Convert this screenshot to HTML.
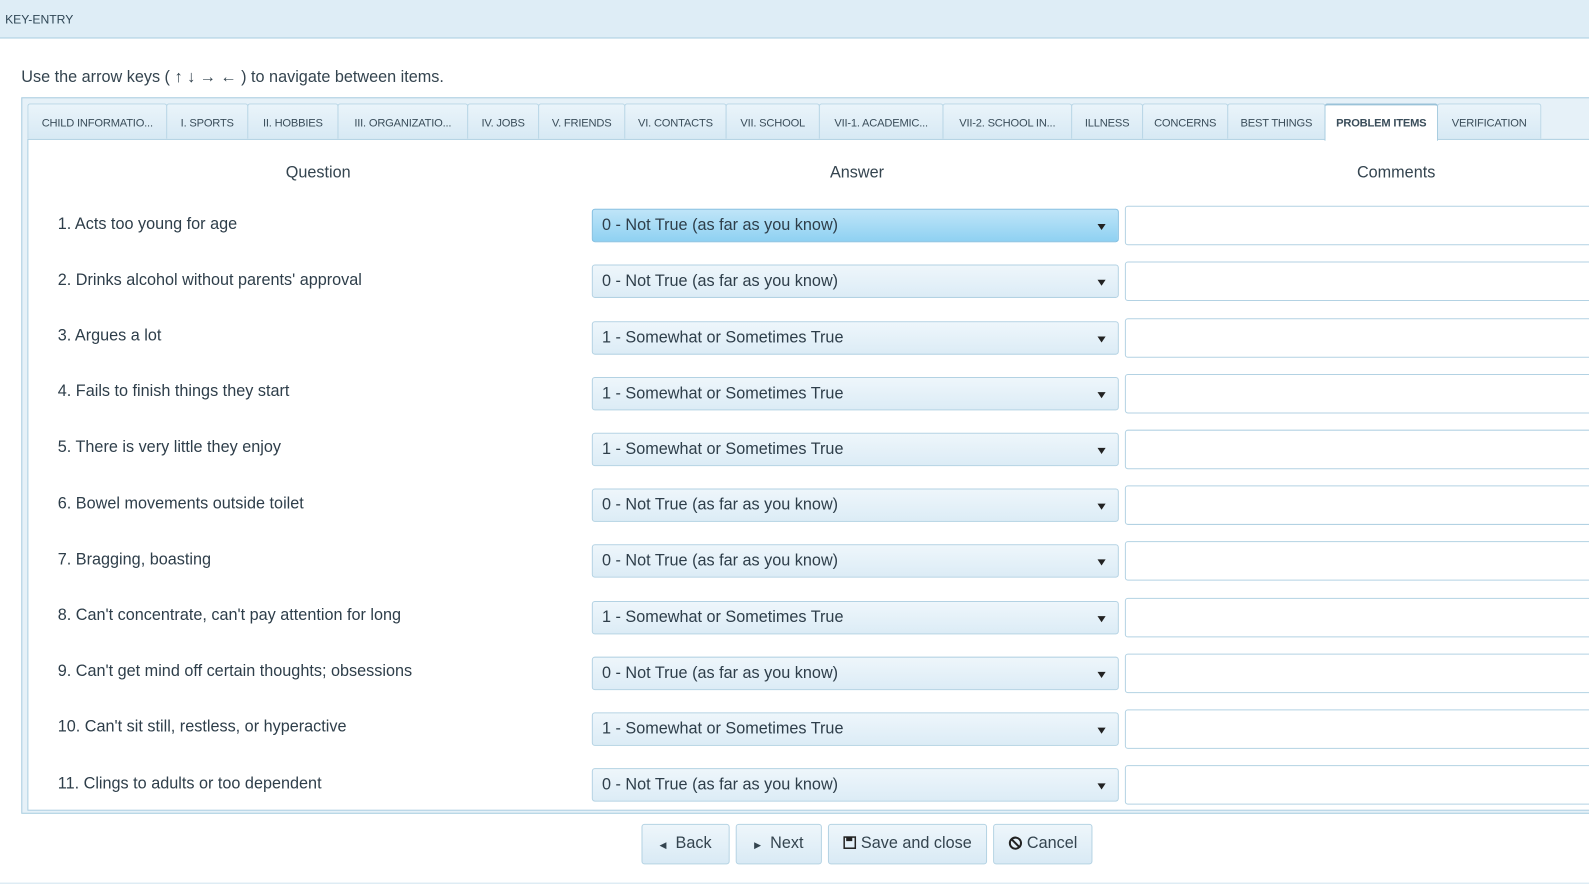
<!DOCTYPE html>
<html><head><style>
html,body{margin:0;width:1589px;height:885px;overflow:hidden;background:#fff}
#w{position:absolute;left:0;top:0;width:1568px;height:873px;transform:scale(1.0134);transform-origin:0 0;font-family:"Liberation Sans",sans-serif;color:#2b3a45}
.hdr{position:absolute;left:0;top:0;width:1600px;height:38px;background:#deedf6;border-bottom:1px solid #a9cde0;font-size:12px;line-height:38px;padding-left:5px;box-sizing:border-box;color:#2f4655}
.hint{position:absolute;left:21px;top:68px;font-size:16px;color:#34444f}
.panel{position:absolute;left:21px;top:96px;width:1580px;height:707px;border:1px solid #a9cde0;background:#e6f1f8;box-sizing:border-box}
.content{position:absolute;left:27px;top:137px;width:1570px;height:663px;border:1px solid #a9cde0;background:#fff;box-sizing:border-box}
.tab{position:absolute;top:102px;height:35px;border:1px solid #b9d6e6;border-bottom:none;background:linear-gradient(#eaf4fa,#d7e9f4);font-size:11px;line-height:38px;text-align:center;color:#3a4d5a;box-sizing:border-box;border-radius:3px 3px 0 0;letter-spacing:-0.2px}
.tab.act{background:#fff;height:37px;font-weight:bold;border-color:#a9cde0;border-top:2px solid #9ac2d8;line-height:36px;z-index:2}
.th{position:absolute;top:162px;font-size:16px;color:#34444f}
.q{position:absolute;left:57px;font-size:16px;color:#2e3e4a}
.sel{position:absolute;left:584px;width:520px;height:33px;border:1px solid #b3d2e3;border-radius:3px;background:linear-gradient(#eef6fb,#dcecf6);box-sizing:border-box;font-size:16px;line-height:32px;padding-left:9px;color:#2e3e4a}
.sel.f{background:linear-gradient(#bfe5f8,#8fd1f2);border-color:#7fbde0}
.sel:after{content:"";position:absolute;right:12px;top:14px;border-left:4px solid transparent;border-right:4px solid transparent;border-top:6px solid #222}
.inp{position:absolute;left:1110px;width:490px;height:39px;border:1px solid #b3d2e3;border-radius:3px;box-sizing:border-box;background:#fff}
.btn{position:absolute;top:813px;height:40px;border:1px solid #b3d2e3;border-radius:3px;background:linear-gradient(#eef6fb,#d9eaf5);box-sizing:border-box;font-size:16px;line-height:38px;text-align:center;color:#34444f}
.line{position:absolute;left:0;top:871px;width:1600px;height:1px;background:#cfe3ee}
</style></head><body><div id="w">
<div class="hdr">KEY-ENTRY</div>
<div class="hint">Use the arrow keys ( ↑ ↓ → ← ) to navigate between items.</div>
<div class="panel"></div>
<div class="tab" style="left:27px;width:138px">CHILD INFORMATIO...</div>
<div class="tab" style="left:164px;width:81px">I. SPORTS</div>
<div class="tab" style="left:244px;width:90px">II. HOBBIES</div>
<div class="tab" style="left:333px;width:129px">III. ORGANIZATIO...</div>
<div class="tab" style="left:461px;width:71px">IV. JOBS</div>
<div class="tab" style="left:531px;width:86px">V. FRIENDS</div>
<div class="tab" style="left:616px;width:101px">VI. CONTACTS</div>
<div class="tab" style="left:716px;width:93px">VII. SCHOOL</div>
<div class="tab" style="left:808px;width:123px">VII-1. ACADEMIC...</div>
<div class="tab" style="left:930px;width:128px">VII-2. SCHOOL IN...</div>
<div class="tab" style="left:1057px;width:71px">ILLNESS</div>
<div class="tab" style="left:1127px;width:85px">CONCERNS</div>
<div class="tab" style="left:1211px;width:97px">BEST THINGS</div>
<div class="tab act" style="left:1307px;width:112px">PROBLEM ITEMS</div>
<div class="tab" style="left:1418px;width:103px">VERIFICATION</div>
<div class="content"></div>
<div class="th" style="left:282px">Question</div>
<div class="th" style="left:819px">Answer</div>
<div class="th" style="left:1339px">Comments</div>

<div class="q" style="top:213px">1. Acts too young for age</div><div class="sel f" style="top:206px">0 - Not True (as far as you know)</div><div class="inp" style="top:203px"></div>
<div class="q" style="top:268px">2. Drinks alcohol without parents' approval</div><div class="sel" style="top:261px">0 - Not True (as far as you know)</div><div class="inp" style="top:258px"></div>
<div class="q" style="top:323px">3. Argues a lot</div><div class="sel" style="top:317px">1 - Somewhat or Sometimes True</div><div class="inp" style="top:314px"></div>
<div class="q" style="top:378px">4. Fails to finish things they start</div><div class="sel" style="top:372px">1 - Somewhat or Sometimes True</div><div class="inp" style="top:369px"></div>
<div class="q" style="top:433px">5. There is very little they enjoy</div><div class="sel" style="top:427px">1 - Somewhat or Sometimes True</div><div class="inp" style="top:424px"></div>
<div class="q" style="top:489px">6. Bowel movements outside toilet</div><div class="sel" style="top:482px">0 - Not True (as far as you know)</div><div class="inp" style="top:479px"></div>
<div class="q" style="top:544px">7. Bragging, boasting</div><div class="sel" style="top:537px">0 - Not True (as far as you know)</div><div class="inp" style="top:534px"></div>
<div class="q" style="top:599px">8. Can't concentrate, can't pay attention for long</div><div class="sel" style="top:593px">1 - Somewhat or Sometimes True</div><div class="inp" style="top:590px"></div>
<div class="q" style="top:654px">9. Can't get mind off certain thoughts; obsessions</div><div class="sel" style="top:648px">0 - Not True (as far as you know)</div><div class="inp" style="top:645px"></div>
<div class="q" style="top:709px">10. Can't sit still, restless, or hyperactive</div><div class="sel" style="top:703px">1 - Somewhat or Sometimes True</div><div class="inp" style="top:700px"></div>
<div class="q" style="top:765px">11. Clings to adults or too dependent</div><div class="sel" style="top:758px">0 - Not True (as far as you know)</div><div class="inp" style="top:755px"></div>

<div class="btn" style="left:633px;width:87px"><span style="font-size:9px">◀</span>&nbsp; Back</div>
<div class="btn" style="left:726px;width:85px"><span style="font-size:9px">▶</span>&nbsp; Next</div>
<div class="btn" style="left:817px;width:157px"><svg width="13" height="13" viewBox="0 0 13 13" style="vertical-align:-1px"><rect x="1" y="1" width="11" height="11" fill="none" stroke="#222" stroke-width="1.5"/><rect x="3" y="1" width="6" height="4" fill="#222"/></svg> Save and close</div>
<div class="btn" style="left:980px;width:98px"><svg width="14" height="14" viewBox="0 0 14 14" style="vertical-align:-2px"><circle cx="7" cy="7" r="5.5" fill="none" stroke="#222" stroke-width="2"/><line x1="3" y1="3" x2="11" y2="11" stroke="#222" stroke-width="2"/></svg> Cancel</div>
<div class="line"></div>
</div></body></html>
